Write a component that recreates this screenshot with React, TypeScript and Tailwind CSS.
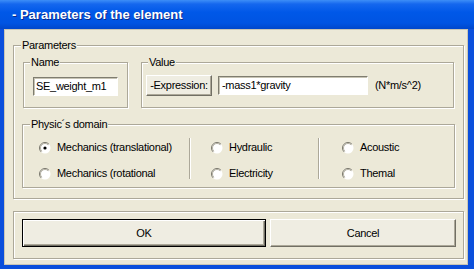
import React from 'react';

const etched = 'border border-[#aca899] shadow-[inset_1px_1px_0_#fff,1px_1px_0_#fff]';

const GroupBox: React.FC<{ label: string; className?: string; labelLeft?: string; children?: React.ReactNode }> = ({
  label,
  className = '',
  labelLeft = 'left-[6px]',
  children,
}) => (
  <div className={`relative ${etched} ${className}`}>
    <span className={`absolute top-[-7px] ${labelLeft} px-[1px] bg-[#ece9d8] leading-[13px]`}>{label}</span>
    {children}
  </div>
);

const Radio: React.FC<{ checked?: boolean; label: string }> = ({ checked, label }) => (
  <div className="flex items-center h-[13px] gap-[6px]">
    <svg width="12" height="12" viewBox="0 0 12 12" className="shrink-0">
      <circle cx="6" cy="6" r="5.5" fill="#fff" />
      <path d="M2.11 9.89 A5.5 5.5 0 0 1 9.89 2.11" fill="none" stroke="#77756a" strokeWidth="1" />
      <path d="M2.8 9.2 A4.5 4.5 0 0 1 9.2 2.8" fill="none" stroke="#b3b0a1" strokeWidth="1" />
      {checked && <circle cx="6" cy="6" r="1.6" fill="#000" />}
    </svg>
    <span className="leading-[13px] whitespace-nowrap">{label}</span>
  </div>
);

const Separator: React.FC = () => (
  <div className="w-[2px] h-[41px] shrink-0 border-l border-[#aca899] bg-white" />
);

const Field: React.FC<{ value: string; className?: string }> = ({ value, className = '' }) => (
  <div
    className={`h-[19px] bg-white border border-t-[#7f7d70] border-l-[#7f7d70] border-r-white border-b-white shadow-[inset_1px_1px_0_#c7c4b4] flex items-center pl-[2px] leading-[13px] whitespace-nowrap overflow-hidden ${className}`}
  >
    {value}
  </div>
);

const App: React.FC = () => {
  return (
    <div className="w-[474px] h-[269px] flex flex-col bg-[#0b4fdc] font-['Liberation_Sans',Arial,sans-serif] text-[11px] tracking-[-0.3px] text-black">
      {/* title bar */}
      <div className="h-[29px] shrink-0 flex items-center pl-[12px] bg-[linear-gradient(180deg,#3d8ef7_0%,#1567ee_14%,#0058e8_42%,#0054e2_80%,#0047cb_100%)]">
        <span className="text-white font-bold text-[13px] tracking-normal [text-shadow:1px_1px_0_#0a2a8a]">
          - Parameters of the element
        </span>
      </div>

      {/* window frame */}
      <div className="flex-1 flex pl-[4px] pr-[6px] pb-[4px]">
        <div className="flex-1 bg-[#ece9d8] border border-[#c9c6b6] flex flex-col pt-[15px] pl-[8px]">
          <GroupBox label="Parameters" labelLeft="left-[7px]" className="w-[451px] h-[154px] shrink-0 pt-[16px] pl-[9px] flex flex-col">
            <div className="flex gap-[13px]">
              <GroupBox label="Name" className="w-[105px] h-[46px] pt-[14px] pl-[9px]">
                <Field value="SE_weight_m1" className="w-[85px]" />
              </GroupBox>
              <GroupBox label="Value" className="w-[313px] h-[46px] pt-[12px] pl-[4px]">
                <div className="flex items-center h-[21px]">
                  <div className="w-[66px] h-[21px] flex items-center justify-center bg-[#efede2] border border-t-white border-l-white border-r-[#716f64] border-b-[#716f64] shadow-[inset_-1px_-1px_0_#aca899] leading-[13px] whitespace-nowrap">
                    -Expression:
                  </div>
                  <Field value="-mass1*gravity" className="w-[150px] ml-[6px] pl-[3px]" />
                  <span className="ml-[7px] leading-[13px] whitespace-nowrap">(N*m/s^2)</span>
                </div>
              </GroupBox>
            </div>

            <GroupBox label="Physic´s domain" labelLeft="left-[7px]" className="w-[433px] h-[64px] mt-[16px] ml-[-1px] pt-[13px] flex items-start">
              <div className="w-[166px] shrink-0 pt-[3px] pl-[16px] flex flex-col gap-[13px]">
                <Radio checked label="Mechanics (translational)" />
                <Radio label="Mechanics (rotational" />
              </div>
              <Separator />
              <div className="w-[127px] shrink-0 pt-[3px] pl-[20px] flex flex-col gap-[13px]">
                <Radio label="Hydraulic" />
                <Radio label="Electricity" />
              </div>
              <Separator />
              <div className="flex-1 pt-[3px] pl-[22px] flex flex-col gap-[13px]">
                <Radio label="Acoustic" />
                <Radio label="Themal" />
              </div>
            </GroupBox>
          </GroupBox>

          <div className={`${etched} w-[451px] h-[48px] mt-[12px] shrink-0 flex pt-[7px] pl-[8px] gap-[4px]`}>
            <button className="w-[244px] h-[28px] bg-[#efede2] border border-black shadow-[inset_1px_1px_0_#fff,inset_-1px_-1px_0_#716f64,inset_-2px_-2px_0_#aca899] leading-[13px]">
              OK
            </button>
            <button className="w-[186px] h-[28px] bg-[#efede2] border border-t-white border-l-white border-r-[#716f64] border-b-[#716f64] shadow-[inset_-1px_-1px_0_#aca899] leading-[13px]">
              Cancel
            </button>
          </div>
        </div>
      </div>
    </div>
  );
};

export default App;
